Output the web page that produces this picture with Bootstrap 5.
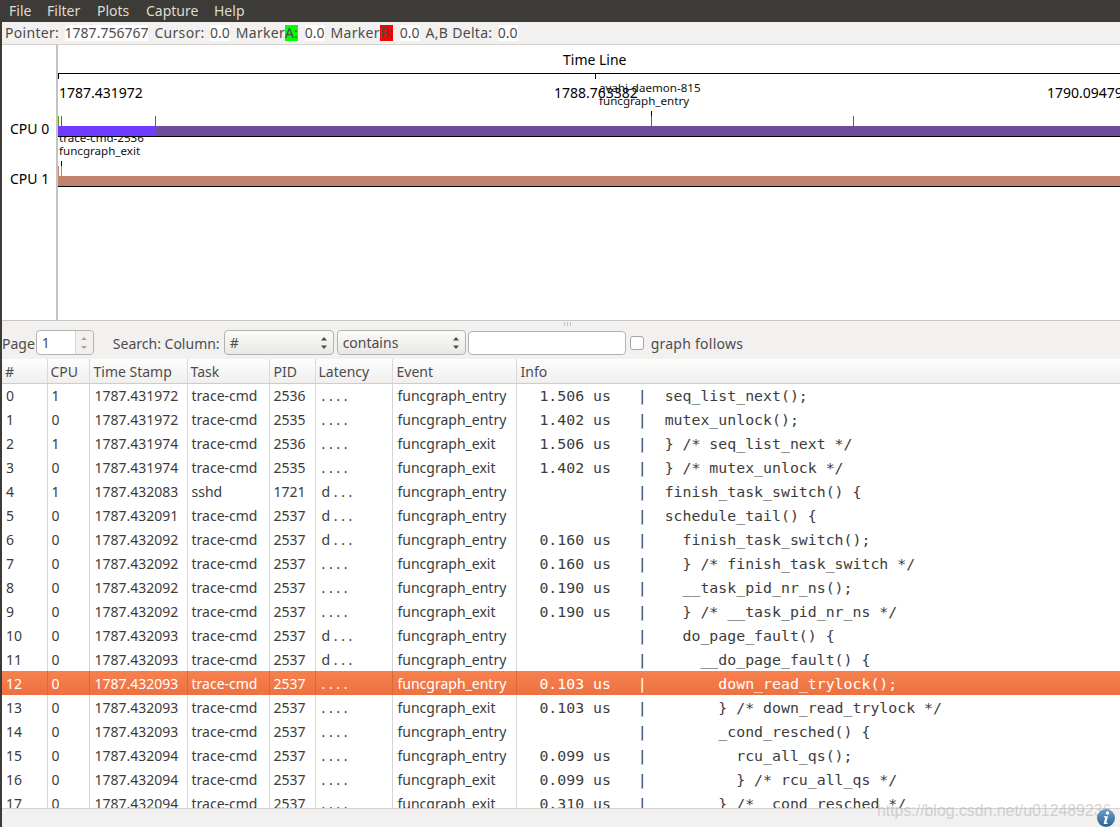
<!DOCTYPE html>
<html lang="en">
<head>
<meta charset="utf-8">
<title>KernelShark</title>
<link href="https://cdn.jsdelivr.net/npm/bootstrap@5.3.0/dist/css/bootstrap.min.css" rel="stylesheet">
<style>
html,body{height:827px;overflow:hidden;}
body{background:#3c3b37;font-family:"Noto Sans",sans-serif;font-size:14px;color:#4c4c4c;line-height:1.2;}
.app-shell{width:1120px;height:827px;}
.menu-strip{height:22px;background:#3c3b37;color:#dfdbd2;padding-left:9px;}
.menu-strip span:nth-child(1){width:38px}
.menu-strip span:nth-child(2){width:50px}
.menu-strip span:nth-child(3){width:49px}
.menu-strip span:nth-child(4){width:68px}
.work-pane{margin-left:2px;height:805px;background:#f2f1f0;}
.info-strip{height:23px;padding-left:3px;border-bottom:1px solid #d4d2d0;white-space:nowrap;}
.info-label{letter-spacing:.3px;}
.info-val{background:#fff;margin:0 6px 0 5.5px;}
.mark-a,.mark-b{margin-right:1.5px;}
.mark-a{background:#00ff00;}
.mark-b{background:#ff0000;}
.plot-canvas{height:276px;background:#fff;position:relative;overflow:hidden;color:#000;border-bottom:1px solid #c9c7c5;}
.plot-canvas>*{position:absolute;}
.plot-text{white-space:nowrap;}
.small-text{font-size:11.6px;color:#111;}
.bar-layer{z-index:2;}
.search-strip{height:38px;padding-top:5px;white-space:nowrap;position:relative;}
.search-strip>span{padding-top:3px;}
.grip-mark{position:absolute;left:562px;top:1px;width:7px;height:4px;padding:0;border-left:1px solid #c4c2bf;border-right:1px solid #c4c2bf;}
.grip-mark::after{content:"";position:absolute;left:2px;top:0;width:1px;height:4px;background:#c4c2bf;}
.spin-box,.combo-box,.text-box{height:25px;border:1px solid #b5b3b0;border-radius:4px;background:#fff;display:flex;align-items:center;}
.spin-box{width:58px;margin-left:1px;}
.spin-box .spin-val{flex:1;padding-left:5px;padding-top:1px;}
.spin-btns{width:18px;height:100%;border-left:1px solid #d8d6d3;background:#f2f1f0;border-radius:0 4px 4px 0;display:flex;align-items:center;justify-content:center;}
.combo-box{background:linear-gradient(#fbfbfa,#e9e8e6);justify-content:space-between;padding:0 5px;}
.combo-box>span{padding-top:1px;}
.combo-a{width:110px;}
.combo-b{width:129px;margin-left:3px;}
.text-box{width:158px;margin-left:2px;height:24px;}
.check-box{width:14px;height:14px;border:1px solid #a6a4a1;border-radius:3px;background:#fff;margin-left:4px;margin-right:7px;}
.search-label{margin-left:19px;margin-right:4px;}
.follow-label{letter-spacing:.25px;}
.table-wrap{height:450px;overflow:hidden;background:#fff;border-bottom:1px solid #d4d2d0;}
.trace-table{table-layout:fixed;width:1118px;margin:0;border-collapse:collapse;color:#3c3c3c;}
.trace-table th,.trace-table td{height:24px;padding:2px 0 0 4px;border:0;border-right:1px solid #d6d6d6;font-weight:400;line-height:20px;white-space:nowrap;overflow:hidden;vertical-align:middle;background:transparent;color:inherit;box-shadow:none;}
.trace-table thead th{background:linear-gradient(#fdfdfd,#f0efee);border-bottom:1px solid #cfcdcb;border-right-color:#dcdad8;color:#4c4c4c;padding-top:3px;padding-left:3px;}
.trace-table thead th:nth-child(3),.trace-table thead th:nth-child(5),.trace-table thead th:nth-child(7),.trace-table thead th:nth-child(8){padding-left:4px;}
.trace-table th:last-child,.trace-table td:last-child{border-right:0;}
.trace-table tbody td:nth-child(n+3){padding-left:5px;}
.trace-table tbody td:nth-child(4),.trace-table tbody td:nth-child(5){padding-left:4px;}
.trace-table tbody td:nth-child(6){padding-left:6px;}
.trace-table td.mono-info{font-family:"DejaVu Sans Mono",monospace;font-size:14.87px;white-space:pre;padding-left:5px;line-height:20px;}
.trace-table tr.sel-row td{background:linear-gradient(#f5814f,#ee7040);color:#fff;border-right-color:#d8693c;}
.foot-strip{height:17px;background:#f2f1f0;}
.watermark{position:absolute;left:877px;top:801px;font-family:"Liberation Sans",sans-serif;font-size:15.85px;color:rgba(170,170,170,.5);white-space:nowrap;z-index:5;}
.info-badge{position:absolute;left:1097px;top:808px;z-index:6;}
</style>
</head>
<body>
<div class="app-shell d-flex flex-column">
  <div class="menu-strip d-flex align-items-center"><span>File</span><span>Filter</span><span>Plots</span><span>Capture</span><span>Help</span></div>
  <div class="work-pane d-flex flex-column">
    <div class="info-strip d-flex align-items-center">
      <span class="info-label">Pointer:</span><span class="info-val">1787.756767</span>
      <span class="info-label">Cursor:</span><span class="info-val">0.0</span>
      <span class="info-label">Marker</span><span class="mark-a">A:</span><span class="info-val">0.0</span>
      <span class="info-label">Marker</span><span class="mark-b">B:</span><span class="info-val">0.0</span>
      <span class="info-label">A,B Delta:</span><span class="info-val">0.0</span>
    </div>
    <div class="plot-canvas">
      <svg class="bar-layer" style="left:0;top:0" width="1118" height="276" viewBox="2 45 1118 276" shape-rendering="crispEdges">
        <rect x="56" y="45" width="2" height="276" fill="#c4c4c4"/>
        <rect x="58" y="73" width="1062" height="1" fill="#000"/>
        <rect x="58" y="73" width="1" height="6" fill="#000"/>
        <rect x="595" y="73" width="1" height="6" fill="#000"/>
        <rect x="58" y="126" width="1062" height="10" fill="#6f4c9b"/>
        <rect x="58" y="126" width="97" height="10" fill="#6f3cff"/>
        <rect x="58" y="136" width="1062" height="1" fill="#000"/>
        <rect x="58" y="116" width="1" height="10" fill="#5a9a10"/>
        <rect x="61" y="116" width="1" height="10" fill="#6f3cff"/>
        <rect x="155" y="116" width="1" height="10" fill="#6f4c9b"/>
        <rect x="651" y="111" width="1" height="5" fill="#000"/>
        <rect x="651" y="116" width="1" height="10" fill="#6f4c9b"/>
        <rect x="853" y="116" width="1" height="10" fill="#6f4c9b"/>
        <rect x="58" y="176" width="1062" height="10" fill="#c38270"/>
        <rect x="58" y="186" width="1062" height="1" fill="#000"/>
        <rect x="58" y="166" width="1" height="10" fill="#c38270"/>
        <rect x="61" y="161" width="1" height="5" fill="#000"/>
        <rect x="61" y="166" width="1" height="10" fill="#c38270"/>
      </svg>
      <span class="plot-text" style="left:561px;top:7px">Time Line</span>
      <span class="plot-text" style="left:57px;top:40px">1787.431972</span>
      <span class="plot-text" style="left:552px;top:40px">1788.763382</span>
      <span class="plot-text" style="left:1045px;top:40px">1790.094791</span>
      <span class="plot-text small-text" style="left:597px;top:36px">avahi-daemon-815</span>
      <span class="plot-text small-text" style="left:597px;top:49px">funcgraph_entry</span>
      <span class="plot-text small-text" style="left:57px;top:86px">trace-cmd-2536</span>
      <span class="plot-text small-text" style="left:57px;top:99px">funcgraph_exit</span>
      <span class="plot-text" style="left:8px;top:76px">CPU 0</span>
      <span class="plot-text" style="left:8px;top:126px">CPU 1</span>
    </div>
    <div class="search-strip d-flex align-items-center">
      <span class="grip-mark"></span>
      <span>Page</span>
      <div class="spin-box"><span class="spin-val">1</span><span class="spin-btns"><svg width="8" height="14" viewBox="0 0 8 14"><path d="M4 1 7 4H1zM4 13 1 10H7z" fill="#a8a6a3"/></svg></span></div>
      <span class="search-label">Search: Column:</span>
      <div class="combo-box combo-a"><span>#</span><svg width="8" height="14" viewBox="0 0 8 14"><path d="M4 1 7 4.5H1zM4 13 1 9.5H7z" fill="#4c4c4c"/></svg></div>
      <div class="combo-box combo-b"><span>contains</span><svg width="8" height="14" viewBox="0 0 8 14"><path d="M4 1 7 4.5H1zM4 13 1 9.5H7z" fill="#4c4c4c"/></svg></div>
      <div class="text-box"></div>
      <div class="check-box"></div>
      <span class="follow-label">graph follows</span>
    </div>
    <div class="table-wrap">
      <table class="table trace-table">
        <colgroup><col style="width:45px"><col style="width:42px"><col style="width:98px"><col style="width:82px"><col style="width:46px"><col style="width:77px"><col style="width:124px"><col></colgroup>
        <thead><tr><th>#</th><th>CPU</th><th>Time Stamp</th><th>Task</th><th>PID</th><th>Latency</th><th>Event</th><th>Info</th></tr></thead>
        <tbody>
<tr><td>0</td><td>1</td><td>1787.431972</td><td>trace-cmd</td><td>2536</td><td>. . . .</td><td>funcgraph_entry</td><td class="mono-info">  1.506 us   |  seq_list_next();</td></tr>
<tr><td>1</td><td>0</td><td>1787.431972</td><td>trace-cmd</td><td>2535</td><td>. . . .</td><td>funcgraph_entry</td><td class="mono-info">  1.402 us   |  mutex_unlock();</td></tr>
<tr><td>2</td><td>1</td><td>1787.431974</td><td>trace-cmd</td><td>2536</td><td>. . . .</td><td>funcgraph_exit</td><td class="mono-info">  1.506 us   |  } /* seq_list_next */</td></tr>
<tr><td>3</td><td>0</td><td>1787.431974</td><td>trace-cmd</td><td>2535</td><td>. . . .</td><td>funcgraph_exit</td><td class="mono-info">  1.402 us   |  } /* mutex_unlock */</td></tr>
<tr><td>4</td><td>1</td><td>1787.432083</td><td>sshd</td><td>1721</td><td>d . . .</td><td>funcgraph_entry</td><td class="mono-info">             |  finish_task_switch() {</td></tr>
<tr><td>5</td><td>0</td><td>1787.432091</td><td>trace-cmd</td><td>2537</td><td>d . . .</td><td>funcgraph_entry</td><td class="mono-info">             |  schedule_tail() {</td></tr>
<tr><td>6</td><td>0</td><td>1787.432092</td><td>trace-cmd</td><td>2537</td><td>d . . .</td><td>funcgraph_entry</td><td class="mono-info">  0.160 us   |    finish_task_switch();</td></tr>
<tr><td>7</td><td>0</td><td>1787.432092</td><td>trace-cmd</td><td>2537</td><td>. . . .</td><td>funcgraph_exit</td><td class="mono-info">  0.160 us   |    } /* finish_task_switch */</td></tr>
<tr><td>8</td><td>0</td><td>1787.432092</td><td>trace-cmd</td><td>2537</td><td>. . . .</td><td>funcgraph_entry</td><td class="mono-info">  0.190 us   |    __task_pid_nr_ns();</td></tr>
<tr><td>9</td><td>0</td><td>1787.432092</td><td>trace-cmd</td><td>2537</td><td>. . . .</td><td>funcgraph_exit</td><td class="mono-info">  0.190 us   |    } /* __task_pid_nr_ns */</td></tr>
<tr><td>10</td><td>0</td><td>1787.432093</td><td>trace-cmd</td><td>2537</td><td>d . . .</td><td>funcgraph_entry</td><td class="mono-info">             |    do_page_fault() {</td></tr>
<tr><td>11</td><td>0</td><td>1787.432093</td><td>trace-cmd</td><td>2537</td><td>d . . .</td><td>funcgraph_entry</td><td class="mono-info">             |      __do_page_fault() {</td></tr>
<tr class="sel-row"><td>12</td><td>0</td><td>1787.432093</td><td>trace-cmd</td><td>2537</td><td>. . . .</td><td>funcgraph_entry</td><td class="mono-info">  0.103 us   |        down_read_trylock();</td></tr>
<tr><td>13</td><td>0</td><td>1787.432093</td><td>trace-cmd</td><td>2537</td><td>. . . .</td><td>funcgraph_exit</td><td class="mono-info">  0.103 us   |        } /* down_read_trylock */</td></tr>
<tr><td>14</td><td>0</td><td>1787.432093</td><td>trace-cmd</td><td>2537</td><td>. . . .</td><td>funcgraph_entry</td><td class="mono-info">             |        _cond_resched() {</td></tr>
<tr><td>15</td><td>0</td><td>1787.432094</td><td>trace-cmd</td><td>2537</td><td>. . . .</td><td>funcgraph_entry</td><td class="mono-info">  0.099 us   |          rcu_all_qs();</td></tr>
<tr><td>16</td><td>0</td><td>1787.432094</td><td>trace-cmd</td><td>2537</td><td>. . . .</td><td>funcgraph_exit</td><td class="mono-info">  0.099 us   |          } /* rcu_all_qs */</td></tr>
<tr><td>17</td><td>0</td><td>1787.432094</td><td>trace-cmd</td><td>2537</td><td>. . . .</td><td>funcgraph_exit</td><td class="mono-info">  0.310 us   |        } /* _cond_resched */</td></tr>
        </tbody>
      </table>
    </div>
    <div class="foot-strip"></div>
  </div>
</div>
<span class="watermark">https://blog.csdn.net/u012489236</span>
<svg class="info-badge" width="18" height="19" viewBox="0 0 18 19"><defs><linearGradient id="ib" x1="0" y1="0" x2="0" y2="1"><stop offset="0" stop-color="#6f9fc8"/><stop offset="1" stop-color="#2a6296"/></linearGradient></defs><circle cx="9" cy="10" r="9" fill="url(#ib)"/><circle cx="10.5" cy="5" r="1.7" fill="#fff"/><path d="M7 8.2h4l-1.8 6.6h1.6l-.4 1.2H6.6l1.7-6.6H6.7z" fill="#fff"/></svg>
<script src="https://cdn.jsdelivr.net/npm/bootstrap@5.3.0/dist/js/bootstrap.bundle.min.js"></script>
</body>
</html>
